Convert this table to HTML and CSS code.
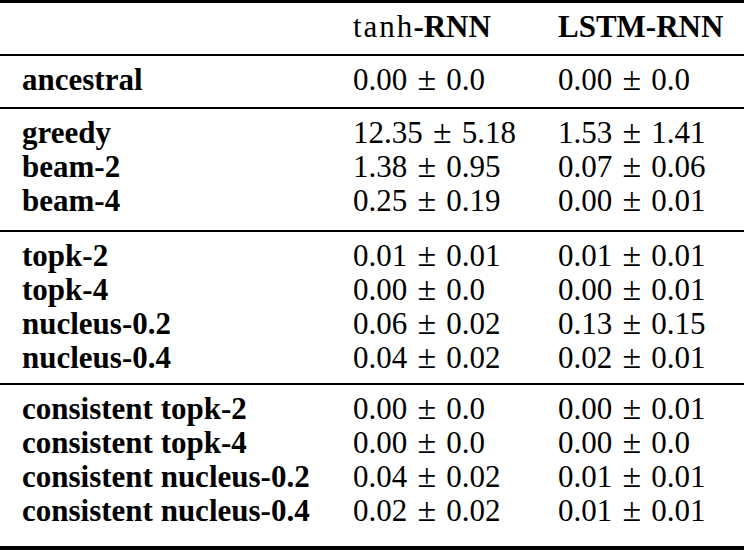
FILE: index.html
```html
<!DOCTYPE html>
<html>
<head>
<meta charset="utf-8">
<link rel="stylesheet" href="styles.css">
</head>
<body>
<div class="tbl">
  <div class="sec head">
    <div class="row">
      <span class="c1"></span>
      <span class="c2"><span class="fn">tanh</span><b>-RNN</b></span>
      <span class="c3"><b>LSTM-RNN</b></span>
    </div>
  </div>
  <div class="sec">
    <div class="row"><b class="c1">ancestral</b><span class="c2">0.00<span class="pm">±</span>0.0</span><span class="c3">0.00<span class="pm">±</span>0.0</span></div>
  </div>
  <div class="sec beam">
    <div class="row"><b class="c1">greedy</b><span class="c2">12.35<span class="pm">±</span>5.18</span><span class="c3">1.53<span class="pm">±</span>1.41</span></div>
    <div class="row"><b class="c1">beam-2</b><span class="c2">1.38<span class="pm">±</span>0.95</span><span class="c3">0.07<span class="pm">±</span>0.06</span></div>
    <div class="row"><b class="c1">beam-4</b><span class="c2">0.25<span class="pm">±</span>0.19</span><span class="c3">0.00<span class="pm">±</span>0.01</span></div>
  </div>
  <div class="sec topk">
    <div class="row"><b class="c1">topk-2</b><span class="c2">0.01<span class="pm">±</span>0.01</span><span class="c3">0.01<span class="pm">±</span>0.01</span></div>
    <div class="row"><b class="c1">topk-4</b><span class="c2">0.00<span class="pm">±</span>0.0</span><span class="c3">0.00<span class="pm">±</span>0.01</span></div>
    <div class="row"><b class="c1">nucleus-0.2</b><span class="c2">0.06<span class="pm">±</span>0.02</span><span class="c3">0.13<span class="pm">±</span>0.15</span></div>
    <div class="row"><b class="c1">nucleus-0.4</b><span class="c2">0.04<span class="pm">±</span>0.02</span><span class="c3">0.02<span class="pm">±</span>0.01</span></div>
  </div>
  <div class="sec last">
    <div class="row"><b class="c1">consistent topk-2</b><span class="c2">0.00<span class="pm">±</span>0.0</span><span class="c3">0.00<span class="pm">±</span>0.01</span></div>
    <div class="row"><b class="c1">consistent topk-4</b><span class="c2">0.00<span class="pm">±</span>0.0</span><span class="c3">0.00<span class="pm">±</span>0.0</span></div>
    <div class="row"><b class="c1">consistent nucleus-0.2</b><span class="c2">0.04<span class="pm">±</span>0.02</span><span class="c3">0.01<span class="pm">±</span>0.01</span></div>
    <div class="row"><b class="c1">consistent nucleus-0.4</b><span class="c2">0.02<span class="pm">±</span>0.02</span><span class="c3">0.01<span class="pm">±</span>0.01</span></div>
  </div>
</div>
</body>
</html>
```

FILE: styles.css
```css
html, body {
  margin: 0;
  padding: 0;
  background: #ffffff;
}

body {
  font-family: "Liberation Serif", "Times New Roman", serif;
  font-size: 31px;
  color: #000000;
}

.tbl {
  width: 744px;
  border-top: 3px solid #000;
}

.sec {
  padding: 7px 0 10px 0;
  border-bottom: 2px solid #000;
}

.sec.beam {
  padding-bottom: 12px;
}

.sec.topk {
  padding-bottom: 8px;
}

.sec.last {
  padding-bottom: 18px;
  border-bottom: 4px solid #000;
}

.row {
  display: grid;
  grid-template-columns: 331px 205px 1fr;
  padding-left: 22px;
  line-height: 34px;
  height: 34px;
  white-space: nowrap;
}

.c1 {
  font-weight: bold;
}

.fn {
  letter-spacing: 2px;
  margin-right: -1px;
}

.pm {
  display: inline-block;
  width: 25px;
  margin: 0 7px;
  text-align: center;
  font-size: 34px;
  line-height: 30px;
}
```
